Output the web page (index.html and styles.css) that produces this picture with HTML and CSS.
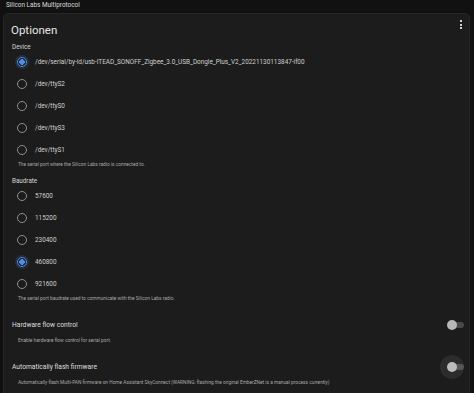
FILE: index.html
```html
<!DOCTYPE html>
<html lang="de">
<head>
    <meta charset="UTF-8">
    <title>Silicon Labs Multiprotocol</title>
    <link rel="stylesheet" href="styles.css">
</head>
<body>
    <div class="topbar">Silicon Labs Multiprotocol</div>
    <div class="card">
        <div class="card-head">
            <h1>Optionen</h1>
            <span class="menu"><i></i><i></i><i></i></span>
        </div>

        <div class="field">
            <div class="field-label">Device</div>
            <label class="radio checked"><span class="dot"></span>/dev/serial/by-id/usb-ITEAD_SONOFF_Zigbee_3.0_USB_Dongle_Plus_V2_20221130113847-if00</label>
            <label class="radio"><span class="dot"></span>/dev/ttyS2</label>
            <label class="radio"><span class="dot"></span>/dev/ttyS0</label>
            <label class="radio"><span class="dot"></span>/dev/ttyS3</label>
            <label class="radio"><span class="dot"></span>/dev/ttyS1</label>
            <div class="helper">The serial port where the Silicon Labs radio is connected to.</div>
        </div>

        <div class="field">
            <div class="field-label">Baudrate</div>
            <label class="radio"><span class="dot"></span>57600</label>
            <label class="radio"><span class="dot"></span>115200</label>
            <label class="radio"><span class="dot"></span>230400</label>
            <label class="radio checked"><span class="dot"></span>460800</label>
            <label class="radio"><span class="dot"></span>921600</label>
            <div class="helper">The serial port baudrate used to communicate with the Silicon Labs radio.</div>
        </div>

        <div class="switch-row first">
            <div class="switch-title">Hardware flow control</div>
            <span class="switch"></span>
        </div>
        <div class="helper switch-help">Enable hardware flow control for serial port.</div>

        <div class="switch-row">
            <div class="switch-title">Automatically flash firmware</div>
            <span class="switch focus"></span>
        </div>
        <div class="helper switch-help last">Automatically flash Multi-PAN firmware on Home Assistant SkyConnect (WARNING: flashing the original EmberZNet is a manual process currently)</div>
    </div>
</body>
</html>
```

FILE: styles.css
```css
body {
    margin: 0;
    background: #111111;
    font-family: Roboto, "Liberation Sans", sans-serif;
    color: #e1e1e1;
    overflow: hidden;
}

.topbar {
    height: 13px;
    line-height: 11px;
    padding-left: 6px;
    font-size: 6.4px;
    color: #dcdcdc;
}

.card {
    margin: 0 4px 0 3px;
    background: #1c1c1c;
    border: 1px solid #262626;
    border-bottom: none;
    border-radius: 6px 6px 0 0;
    padding: 0 7px;
    height: 379px;
    overflow: hidden;
}

.card-head {
    display: flex;
    justify-content: space-between;
    align-items: flex-start;
    height: 29px;
}

h1 {
    margin: 10px 0 0 0;
    font-size: 11.5px;
    font-weight: 400;
    color: #e6e6e6;
    line-height: 12px;
}

.menu {
    display: flex;
    flex-direction: column;
    gap: 1.6px;
    margin: 6px 0 0 0;
}

.menu i {
    width: 2px;
    height: 2px;
    background: #d0d0d0;
}

.field-label {
    font-size: 6.3px;
    color: #d6d6d6;
    height: 8px;
    line-height: 8px;
    margin-left: 1px;
}

.radio {
    display: flex;
    align-items: center;
    height: 22px;
    font-size: 6.4px;
    color: #d0d0d0;
}

.dot {
    box-sizing: border-box;
    width: 10px;
    height: 10px;
    border: 1.3px solid #8e8e8e;
    border-radius: 50%;
    margin: 0 8px 0 6px;
    flex-shrink: 0;
}

.radio.checked .dot {
    border-color: #4e8fe6;
    background: radial-gradient(circle, #4e8fe6 0 2.6px, transparent 3px);
    box-shadow: 0 0 0 2px rgba(78, 143, 230, 0.18);
}

.helper {
    font-size: 4.8px;
    color: #a8a8a8;
    margin-left: 7px;
    height: 16px;
    line-height: 7px;
}

.switch-row {
    display: flex;
    justify-content: space-between;
    align-items: center;
    height: 16px;
    margin-top: 7px;
    margin-left: 1px;
}

.switch-row.first {
    margin-top: 6px;
}

.switch-title {
    font-size: 6.7px;
    color: #dedede;
}

.switch {
    position: relative;
    width: 13px;
    height: 6px;
    border-radius: 3px;
    background: #4a4a4a;
    margin-right: -2px;
}

.switch::before {
    content: "";
    position: absolute;
    left: -4px;
    top: -2px;
    width: 10px;
    height: 10px;
    border-radius: 50%;
    background: #b8b8b8;
}

.switch.focus::after {
    content: "";
    position: absolute;
    left: -11px;
    top: -9px;
    width: 24px;
    height: 24px;
    border-radius: 50%;
    background: rgba(255, 255, 255, 0.07);
}

.switch-help {
    margin-top: 4px;
    height: 15px;
    white-space: nowrap;
}

.switch-help.last {
    height: 10px;
}
```
